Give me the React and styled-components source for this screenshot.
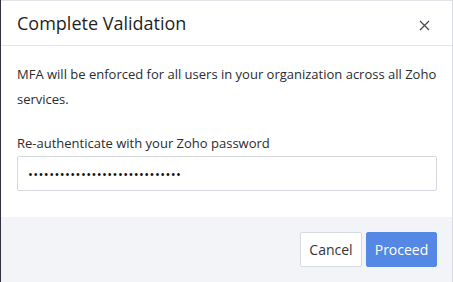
import React from "react";
import styled, { createGlobalStyle } from "styled-components";

const Global = createGlobalStyle`
  html, body { margin: 0; padding: 0; background: #ffffff; }
  body { font-family: "Open Sans", "Noto Sans", sans-serif; }
  * { box-sizing: border-box; }
`;

const Page = styled.div`
  width: 453px;
  height: 282px;
  display: flex;
  border-left: 1px solid #34303f;
  background: #ffffff;
`;

const Dialog = styled.div`
  flex: 1;
  display: flex;
  flex-direction: column;
  border-top: 1px solid #e2e2e8;
  border-right: 1px solid #dcdde3;
  background: #ffffff;
`;

const Header = styled.div`
  height: 45px;
  display: flex;
  align-items: center;
  justify-content: space-between;
  padding: 0 21px 0 16px;
  border-bottom: 1px solid #e4e5ea;
`;

const Title = styled.h1`
  margin: 0;
  font-size: 18px;
  font-weight: 400;
  color: #1f1f24;
  line-height: 24px;
`;

const Close = styled.button`
  width: 14px;
  height: 14px;
  padding: 0;
  border: none;
  background: transparent;
  display: flex;
  align-items: center;
  justify-content: center;
  margin-top: 4px;
`;

const Body = styled.div`
  padding: 16px 15px 26px 16px;
`;

const Text = styled.p`
  margin: 0;
  font-size: 13px;
  line-height: 25px;
  color: #2b2b30;
`;

const Label = styled.label`
  display: block;
  margin-top: 21px;
  font-size: 13px;
  line-height: 20px;
  color: #2b2b30;
`;

const Input = styled.input`
  display: block;
  width: 100%;
  height: 35px;
  margin-top: 3px;
  padding: 0 10px;
  border: 1px solid #d6d8df;
  border-radius: 2px;
  font-family: "Open Sans", sans-serif;
  font-size: 13px;
  letter-spacing: 0.4px;
  color: #111;
  outline: none;
  background: #fff;
`;

const Footer = styled.div`
  flex: 1;
  background: #f3f4f8;
  display: flex;
  justify-content: flex-end;
  align-items: flex-start;
  gap: 4px;
  padding: 15px 15px 0 0;
`;

const Button = styled.button`
  height: 35px;
  width: ${(p) => (p.$primary ? "71px" : "62px")};
  padding: 0;
  border-radius: 2px;
  border: 1px solid ${(p) => (p.$primary ? "#5588e4" : "#d8dae1")};
  background: ${(p) => (p.$primary ? "#5588e4" : "#ffffff")};
  color: ${(p) => (p.$primary ? "#ffffff" : "#33343c")};
  font-family: "Open Sans", sans-serif;
  font-size: 14px;
  font-weight: ${(p) => (p.$primary ? 500 : 400)};
`;

export default function App() {
  return (
    <>
      <Global />
      <Page>
        <Dialog>
          <Header>
            <Title>Complete Validation</Title>
            <Close aria-label="Close">
              <svg width="11" height="11" viewBox="0 0 11 11">
                <path d="M1 1 L10 10 M10 1 L1 10" stroke="#4a4a50" strokeWidth="1.3" fill="none" />
              </svg>
            </Close>
          </Header>
          <Body>
            <Text>
              MFA will be enforced for all users in your organization across all Zoho services.
            </Text>
            <Label>Re-authenticate with your Zoho password</Label>
            <Input type="password" defaultValue="abcdefghijklmnopqrstuvwxyzabc" readOnly />
          </Body>
          <Footer>
            <Button>Cancel</Button>
            <Button $primary>Proceed</Button>
          </Footer>
        </Dialog>
      </Page>
    </>
  );
}
